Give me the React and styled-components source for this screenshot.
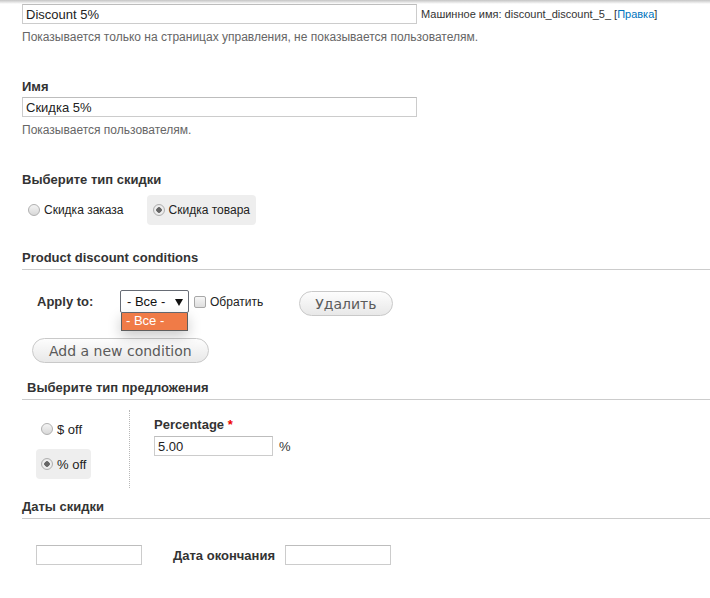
import React from 'react';
import styled, { createGlobalStyle } from 'styled-components';

const GlobalStyle = createGlobalStyle`
body {
  margin: 0;
  background: linear-gradient(to bottom, #c4c4c4 0px, #ffffff 4px) no-repeat #fff;
  font-family: "Liberation Sans", Arial, sans-serif;
  font-size: 13px;
  color: #333;
}
`;

const Page = styled.div`
padding: 4px 0 30px 22px;
`;

const InputRow = styled.div`
display: flex;
align-items: center;
`;

const TextInput = styled.input`
box-sizing: border-box;
width: ${(props) => props.w || 395}px;
height: 20px;
padding: 1px 3px;
border: 1px solid #ccc;
border-top-color: #bdbdbd;
background: #fff;
font-family: "Liberation Sans", Arial, sans-serif;
font-size: 13px;
color: #222;
outline: none;
`;

const MachineName = styled.span`
margin-left: 4px;
font-size: 11px;
color: #333;
a {
  color: #0074bd;
  text-decoration: none;
}
`;

const Description = styled.div`
margin-top: 5px;
margin-bottom: ${(props) => props.mb || 0}px;
font-size: 12px;
line-height: 16px;
color: #666;
`;

const Label = styled.div`
font-weight: bold;
line-height: 16px;
margin-bottom: ${(props) => props.mb || 0}px;
color: #333;
`;

const Required = styled.span`
color: #e00;
`;

const RadioGroup = styled.div`
display: flex;
flex-direction: ${(props) => (props.column ? 'column' : 'row')};
gap: ${(props) => (props.column ? 5 : 17)}px;
margin-top: ${(props) => props.mt || 0}px;
`;

const RadioOption = styled.label`
display: flex;
align-items: center;
height: 30px;
padding: 0 ${(props) => props.pad || 6}px;
border-radius: 4px;
background: ${(props) => (props.selected ? '#eeeeee' : 'transparent')};
font-size: ${(props) => props.size || 12}px;
color: #222;
align-self: flex-start;
`;

const Radio = styled.span`
box-sizing: border-box;
width: 12px;
height: 12px;
margin-right: 4px;
border-radius: 50%;
border: 1px solid #b0b0b0;
background: ${(props) =>
  props.checked
    ? 'radial-gradient(circle, #666 0, #666 2.5px, #f2f2f2 3px, #dcdcdc 100%)'
    : 'linear-gradient(#f4f4f4, #d8d8d8)'};
flex-shrink: 0;
`;

const SectionHeader = styled.div`
margin-top: ${(props) => props.mt || 0}px;
padding: 0 0 3px ${(props) => props.indent || 0}px;
border-bottom: 1px solid #cccccc;
font-weight: bold;
line-height: 16px;
color: #333;
`;

const ConditionRow = styled.div`
display: flex;
align-items: flex-start;
margin-top: 20px;
padding-left: 15px;
`;

const ApplyLabel = styled.div`
width: 83px;
line-height: 23px;
font-weight: bold;
color: #333;
`;

const SelectBox = styled.div`
position: relative;
box-sizing: border-box;
width: 69px;
height: 23px;
display: flex;
align-items: center;
justify-content: space-between;
padding: 0 5px 0 6px;
border: 1px solid #676c75;
border-radius: 2px;
background: #fff;
color: #111;
`;

const Arrow = styled.svg`
width: 8px;
height: 8px;
`;

const DropList = styled.div`
position: absolute;
top: 22px;
left: 0;
width: 67px;
height: 18px;
box-sizing: border-box;
border: 1px solid #5e5e5e;
border-top: none;
background: #f07b47;
color: #fff;
line-height: 16px;
padding-left: 4px;
box-shadow: 0 5px 14px rgba(0, 0, 0, 0.22);
z-index: 2;
`;

const CheckWrap = styled.label`
display: flex;
align-items: center;
height: 23px;
margin-left: 5px;
font-size: 12px;
color: #222;
`;

const Checkbox = styled.span`
box-sizing: border-box;
width: 12px;
height: 12px;
margin-right: 4px;
border: 1px solid #a8a8a8;
border-radius: 2px;
background: linear-gradient(#f6f6f6, #dedede);
`;

const Button = styled.button`
box-sizing: border-box;
height: 25px;
margin-left: ${(props) => props.ml || 0}px;
margin-top: ${(props) => props.mt || 0}px;
padding: 0 ${(props) => props.pad || 16}px;
border: 1px solid #c9c9c9;
border-radius: 13px;
background: linear-gradient(#fdfdfd, #e8e8e8);
font-family: "DejaVu Sans", Verdana, sans-serif;
font-size: 14px;
color: #5a5a5a;
cursor: pointer;
`;

const Columns = styled.div`
display: flex;
margin-top: 10px;
`;

const LeftColumn = styled.div`
box-sizing: border-box;
width: 108px;
padding: 4px 0 9px 14px;
border-right: 1px dotted #b8b8b8;
`;

const RightColumn = styled.div`
padding: 7px 0 0 24px;
`;

const Suffix = styled.span`
margin-left: 6px;
color: #333;
`;

const DatesRow = styled.div`
display: flex;
align-items: center;
margin-top: 26px;
padding-left: 14px;
`;

const DateLabel = styled.span`
margin: 0 10px 0 31px;
font-weight: bold;
color: #333;
`;

const App = () => {
  return (
    <>
      <GlobalStyle />
      <Page>
        <InputRow>
          <TextInput defaultValue="Discount 5%" />
          <MachineName>
            Машинное имя: discount_discount_5_ [<a href="#">Правка</a>]
          </MachineName>
        </InputRow>
        <Description mb={34}>
          Показывается только на страницах управления, не показывается пользователям.
        </Description>

        <Label mb={2}>Имя</Label>
        <TextInput defaultValue="Скидка 5%" />
        <Description mb={34}>Показывается пользователям.</Description>

        <Label>Выберите тип скидки</Label>
        <RadioGroup mt={7}>
          <RadioOption>
            <Radio />
            Скидка заказа
          </RadioOption>
          <RadioOption selected>
            <Radio checked />
            Скидка товара
          </RadioOption>
        </RadioGroup>

        <SectionHeader mt={25}>Product discount conditions</SectionHeader>
        <ConditionRow>
          <ApplyLabel>Apply to:</ApplyLabel>
          <SelectBox>
            <span>- Все -</span>
            <Arrow viewBox="0 0 8 8">
              <path d="M0 1 L8 1 L4 8 Z" fill="#111" />
            </Arrow>
            <DropList>- Все -</DropList>
          </SelectBox>
          <CheckWrap>
            <Checkbox />
            Обратить
          </CheckWrap>
          <Button ml={36} mt={1} pad={15}>Удалить</Button>
        </ConditionRow>
        <Button ml={10} mt={22}>Add a new condition</Button>

        <SectionHeader mt={17} indent={5}>Выберите тип предложения</SectionHeader>
        <Columns>
          <LeftColumn>
            <RadioGroup column>
              <RadioOption pad={5} size={13}>
                <Radio />
                $ off
              </RadioOption>
              <RadioOption pad={5} size={13} selected>
                <Radio checked />
                % off
              </RadioOption>
            </RadioGroup>
          </LeftColumn>
          <RightColumn>
            <Label mb={3}>
              Percentage <Required>*</Required>
            </Label>
            <InputRow>
              <TextInput w={119} defaultValue="5.00" />
              <Suffix>%</Suffix>
            </InputRow>
          </RightColumn>
        </Columns>

        <SectionHeader mt={11}>Даты скидки</SectionHeader>
        <DatesRow>
          <TextInput w={106} />
          <DateLabel>Дата окончания</DateLabel>
          <TextInput w={106} />
        </DatesRow>
      </Page>
    </>
  );
};

export default App;
